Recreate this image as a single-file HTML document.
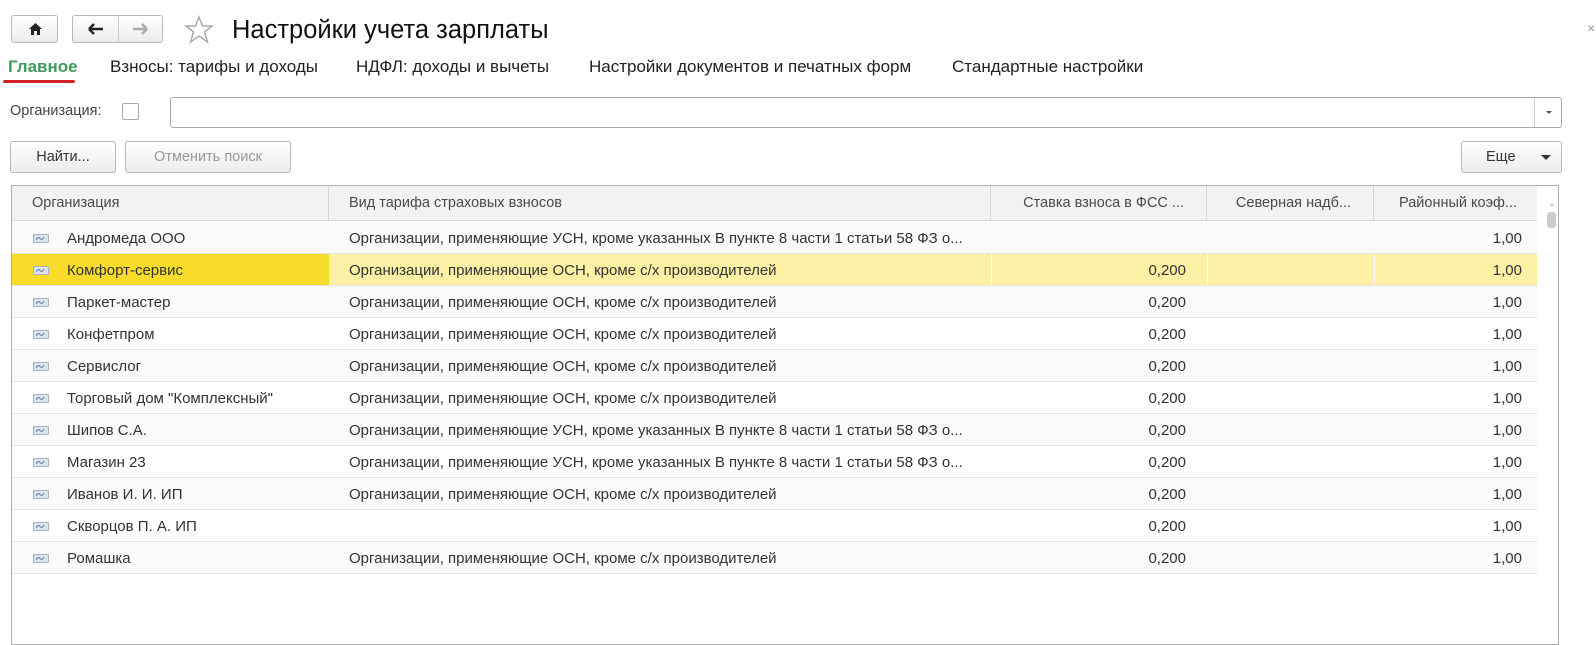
<!DOCTYPE html>
<html><head><meta charset="utf-8"><style>
*{box-sizing:border-box;margin:0;padding:0}
body{width:1596px;height:624px;background:#fff;font-family:"Liberation Sans",Arial,sans-serif;color:#333;position:relative;overflow:hidden;font-size:14px}
.abs{position:absolute}
.btn{position:absolute;border:1px solid #b8b8b8;border-radius:3px;background:linear-gradient(#fff,#ececec);}
.tbl{position:absolute;left:11px;top:185px;width:1548px;height:460px;border:1px solid #b0b0b0;}
.hdr{position:absolute;left:0;top:0;height:35px;width:1525px;background:#f2f2f2;border-bottom:1px solid #d6d6d6}
.hc{position:absolute;top:0;height:34px;line-height:34px;color:#4a4a4a;font-size:14.5px;border-right:1px solid #d6d6d6}
.row{position:absolute;left:0;width:1525px;height:32px;border-bottom:1px solid #e4e4e4;font-size:15px;line-height:33px;color:#333}
.row span{position:absolute;top:0}
.ic{position:absolute;left:21px;top:12px;width:16px;height:9px;background:#dde3ea;border:1px solid #aab4c0;border-radius:1px}
.ic svg{position:absolute;left:2px;top:1px}
.r{text-align:right}
</style></head><body>
<div class="btn" style="left:11px;top:15px;width:47px;height:28px"><svg class="abs" style="left:16px;top:6px" width="15" height="14" viewBox="0 0 15 14"><path d="M7.5 1 L1 7 H3 V13 H6 V9 H9 V13 H12 V7 H14 Z" fill="#222"/></svg></div>
<div class="btn" style="left:72px;top:15px;width:91px;height:28px"><div class="abs" style="left:45px;top:0;width:1px;height:26px;background:#ccc"></div>
<svg class="abs" style="left:14px;top:6px" width="18" height="14" viewBox="0 0 18 14"><path d="M2 7 H16 M2 7 L7 2 M2 7 L7 12" stroke="#222" stroke-width="2.5" fill="none"/></svg>
<svg class="abs" style="left:58px;top:6px" width="18" height="14" viewBox="0 0 18 14"><path d="M16 7 H2 M16 7 L11 2 M16 7 L11 12" stroke="#aaa" stroke-width="2.5" fill="none"/></svg></div>
<svg class="abs" style="left:184px;top:15px" width="30" height="29" viewBox="0 0 30 29"><path d="M15 2 L18.5 11 L28 11 L20.5 17 L23.5 27 L15 21 L6.5 27 L9.5 17 L2 11 L11.5 11 Z" fill="none" stroke="#aaa" stroke-width="1.5"/></svg>
<div class="abs" style="left:232px;top:16px;font-size:25.5px;color:#111">Настройки учета зарплаты</div>
<div class="abs" style="left:1587px;top:20px;color:#999;font-size:14px">×</div>
<div class="abs" style="left:8px;top:57px;font-size:17px;color:#3d9b5c;font-weight:bold">Главное</div>
<div class="abs" style="left:3px;top:80px;width:72px;height:3px;background:#d0202a;border-radius:2px"></div>
<div class="abs" style="left:110px;top:57px;font-size:17px;color:#222">Взносы: тарифы и доходы</div>
<div class="abs" style="left:356px;top:57px;font-size:17px;color:#222">НДФЛ: доходы и вычеты</div>
<div class="abs" style="left:589px;top:57px;font-size:17px;color:#222">Настройки документов и печатных форм</div>
<div class="abs" style="left:952px;top:57px;font-size:17px;color:#222">Стандартные настройки</div>
<div class="abs" style="left:10px;top:103px;font-size:14.5px;color:#444">Организация:</div>
<div class="abs" style="left:122px;top:103px;width:17px;height:17px;border:1px solid #aaa;border-radius:2px"></div>
<div class="abs" style="left:170px;top:97px;width:1392px;height:31px;border:1px solid #aaa;border-radius:3px"><div class="abs" style="right:0;top:0;width:27px;height:29px;border-left:1px solid #ccc"><div class="abs" style="left:11px;top:13px;border:3px solid transparent;border-top:3px solid #555"></div></div></div>
<div class="btn" style="left:10px;top:141px;width:106px;height:32px;line-height:30px;text-align:center;color:#333;font-size:14.5px">Найти...</div>
<div class="btn" style="left:125px;top:141px;width:166px;height:32px;line-height:30px;text-align:center;color:#999;font-size:14.5px">Отменить поиск</div>
<div class="btn" style="left:1461px;top:141px;width:101px;height:32px;line-height:30px;color:#333;font-size:14.5px"><span class="abs" style="left:24px">Еще</span><div class="abs" style="left:79px;top:13px;border:5px solid transparent;border-top:5px solid #333"></div></div>
<div class="tbl">
<div class="hdr">
<div class="hc" style="left:0;width:317px;padding-left:20px">Организация</div>
<div class="hc" style="left:317px;width:662px;padding-left:20px">Вид тарифа страховых взносов</div>
<div class="hc r" style="left:979px;width:216px;padding-right:22px">Ставка взноса в ФСС ...</div>
<div class="hc r" style="left:1195px;width:167px;padding-right:22px">Северная надб...</div>
<div class="hc r" style="left:1362px;width:163px;padding-right:20px;border-right:none">Районный коэф...</div>
</div>
<div class="abs" style="left:1535px;top:26px;width:9px;height:16px;background:#ccc;border-radius:3px"></div>
<div class="abs" style="left:1537px;top:14px;border:3px solid transparent;border-bottom:3px solid #ccc"></div>
<div id="rows"></div>
</div>
<script>
var d=[["Андромеда ООО","Организации, применяющие УСН, кроме указанных В пункте 8 части 1 статьи 58 ФЗ о...",""],
["Комфорт-сервис","Организации, применяющие ОСН, кроме с/х производителей","0,200"],
["Паркет-мастер","Организации, применяющие ОСН, кроме с/х производителей","0,200"],
["Конфетпром","Организации, применяющие ОСН, кроме с/х производителей","0,200"],
["Сервислог","Организации, применяющие ОСН, кроме с/х производителей","0,200"],
["Торговый дом \"Комплексный\"","Организации, применяющие ОСН, кроме с/х производителей","0,200"],
["Шипов С.А.","Организации, применяющие УСН, кроме указанных В пункте 8 части 1 статьи 58 ФЗ о...","0,200"],
["Магазин 23","Организации, применяющие УСН, кроме указанных В пункте 8 части 1 статьи 58 ФЗ о...","0,200"],
["Иванов И. И. ИП","Организации, применяющие ОСН, кроме с/х производителей","0,200"],
["Скворцов П. А. ИП","","0,200"],
["Ромашка","Организации, применяющие ОСН, кроме с/х производителей","0,200"]];
var h="";
d.forEach(function(r,i){var top=36+i*32;var sel=i==1;
var bg=sel?"#fbf0a4":(i%2==0?"#fafafa":"#fff");
h+='<div class="row" style="top:'+top+'px;background:'+bg+'">';
if(sel){h+='<div class="abs" style="left:0;top:0;width:317px;height:31px;background:#f9dc2a"></div>';
h+='<div class="abs" style="left:979px;top:0;width:1px;height:31px;background:#fff"></div><div class="abs" style="left:1195px;top:0;width:1px;height:31px;background:#fff"></div><div class="abs" style="left:1362px;top:0;width:1px;height:31px;background:#fff"></div>';}
h+='<div class="ic"><svg width="10" height="5" viewBox="0 0 10 5"><path d="M0 4 Q2 0 4 2.5 T8 1" stroke="#5a7ca6" stroke-width="1" fill="none"/></svg></div><span style="left:55px">'+r[0]+'</span><span style="left:337px">'+r[1]+'</span>';
h+='<span style="right:351px">'+r[2]+'</span><span style="right:15px">1,00</span></div>';});
document.getElementById("rows").innerHTML=h;
</script>
</body></html>
